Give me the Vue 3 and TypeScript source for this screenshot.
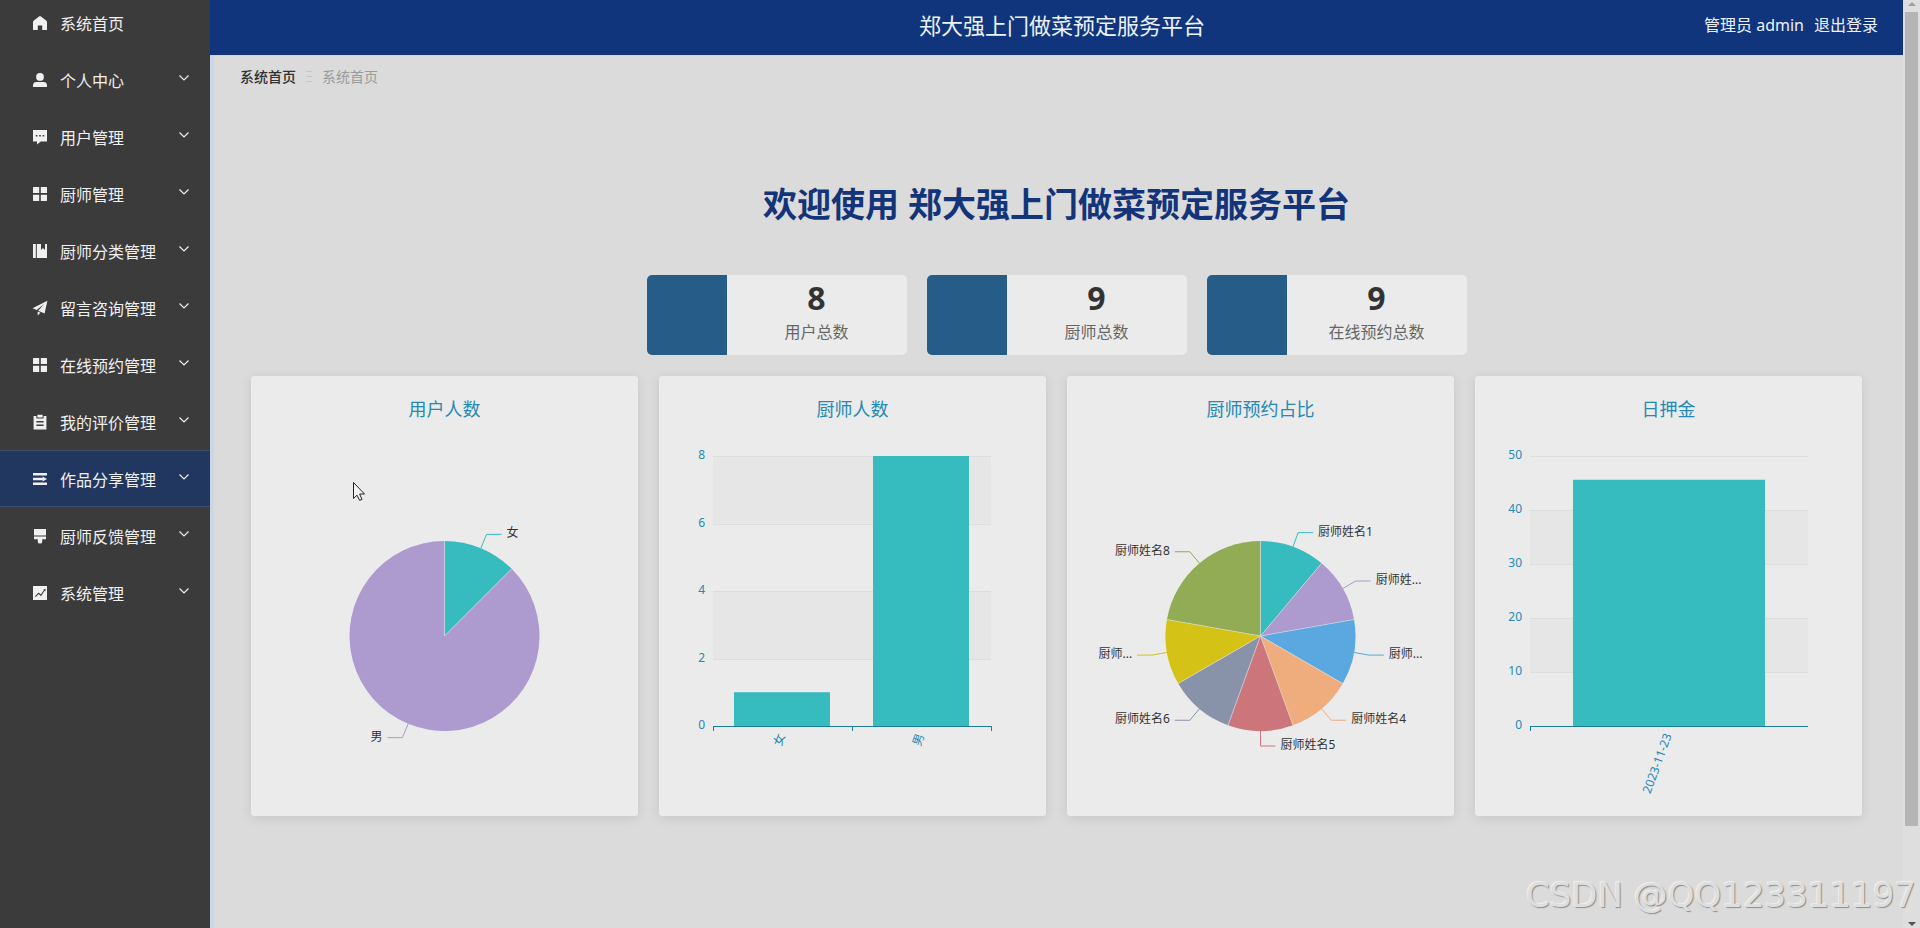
<script setup lang="ts">
interface MenuItem {
  label: string
  icon: string
  expandable: boolean
  active?: boolean
}

interface Slice {
  name: string
  value: number
  color: string
}

interface BarChart {
  max: number
  step: number
  left: number
  right: number
  closingTick: boolean
  bars: { name: string; value: number }[]
}

interface ChartCard {
  title: string
  pie?: Slice[]
  bar?: BarChart
}

const siteName = '郑大强上门做菜预定服务平台'

const icons: Record<string, string> = {
  home: 'M7 1.4 Q8 0.6 9 1.4 L14.4 5.8 Q15 6.4 15 7.2 V15 H10.2 V10.4 H5.8 V15 H1 V7.2 Q1 6.4 1.6 5.8 Z',
  user: 'M8 1 A3.9 3.9 0 1 1 8 8.8 A3.9 3.9 0 1 1 8 1 Z M1 15 V13.4 Q1 10 4.6 10 H11.4 Q15 10 15 13.4 V15 Z',
  comment: 'M1 1 H15 V12.4 H8.8 L5 15.6 V12.4 H1 Z M3.8 6 V7.6 H5.4 V6 Z M7.2 6 V7.6 H8.8 V6 Z M10.6 6 V7.6 H12.2 V6 Z',
  grid: 'M1.6 1 H7.2 V7 H1 V1.6 Z M8.8 1 H14.4 L15 1.6 V7 H8.8 Z M1 8.8 H7.2 V15 H1.6 L1 14.4 Z M8.8 8.8 H15 V14.4 L14.4 15 H8.8 Z',
  book: 'M1 1 H3.8 V15 H1 Z M4.8 1 H9 V7 L11 5 L13 7 V1 H15 V15 H4.8 Z',
  send: 'M15.4 0.8 L0.6 8.2 L4.6 10 L12 4.2 L6.2 10.8 L12.6 13.6 Z M5.6 11.6 L5.8 15.4 L8.4 12.8 Z',
  clipboard: 'M1.6 2 H4.4 V4.4 H11.6 V2 H14.4 V15.4 H1.6 Z M5.4 0.8 H10.6 V3.4 H5.4 Z M4.4 7 V8.4 H11.6 V7 Z M4.4 10.6 V12 H11.6 V10.6 Z',
  list: 'M1 2 H15 V4.4 H1 Z M1 6.8 H10.6 V5.4 L15 8 L10.6 10.6 V9.2 H1 Z M1 11.6 H15 V14 H1 Z',
  brush: 'M2 1 H14 V7.4 H2 Z M2 8.6 H14 V11.2 H10.2 V14 Q10.2 15.6 8 15.6 Q5.8 15.6 5.8 14 V11.2 H2 Z',
  chart: 'M1 1 H15 V15 H1 Z M3 11.2 L3.8 12 L6.6 9 L9 11.2 L12.6 5.8 L13.4 6.4 L13.6 3.8 L11.2 4.8 L11.8 5.2 L8.8 9.6 L6.6 7.6 Z',
}

const menu: MenuItem[] = [
  { label: '系统首页', icon: 'home', expandable: false },
  { label: '个人中心', icon: 'user', expandable: true },
  { label: '用户管理', icon: 'comment', expandable: true },
  { label: '厨师管理', icon: 'grid', expandable: true },
  { label: '厨师分类管理', icon: 'book', expandable: true },
  { label: '留言咨询管理', icon: 'send', expandable: true },
  { label: '在线预约管理', icon: 'grid', expandable: true },
  { label: '我的评价管理', icon: 'clipboard', expandable: true },
  { label: '作品分享管理', icon: 'list', expandable: true, active: true },
  { label: '厨师反馈管理', icon: 'brush', expandable: true },
  { label: '系统管理', icon: 'chart', expandable: true },
]

const stats = [
  { value: 8, label: '用户总数' },
  { value: 9, label: '厨师总数' },
  { value: 9, label: '在线预约总数' },
]

const cards: ChartCard[] = [
  {
    title: '用户人数',
    pie: [
      { name: '女', value: 1, color: '#36bbbf' },
      { name: '男', value: 7, color: '#ad9ace' },
    ],
  },
  {
    title: '厨师人数',
    bar: {
      max: 8, step: 2, left: 54, right: 332, closingTick: true,
      bars: [{ name: '女', value: 1 }, { name: '男', value: 8 }],
    },
  },
  {
    title: '厨师预约占比',
    pie: [
      { name: '厨师姓名1', value: 1, color: '#36bbbf' },
      { name: '厨师姓...', value: 1, color: '#ad9ace' },
      { name: '厨师...', value: 1, color: '#5ba7df' },
      { name: '厨师姓名4', value: 1, color: '#efad7e' },
      { name: '厨师姓名5', value: 1, color: '#cc767c' },
      { name: '厨师姓名6', value: 1, color: '#8892a9' },
      { name: '厨师...', value: 1, color: '#d4c216' },
      { name: '厨师姓名8', value: 2, color: '#92ac55' },
    ],
  },
  {
    title: '日押金',
    bar: {
      max: 50, step: 10, left: 55, right: 333, closingTick: false,
      bars: [{ name: '2023-11-23', value: 45.6 }],
    },
  },
]

const CX = 193.5
const CY = 196
const R = 95
const LEAD = 15

function polar(radius: number, turn: number): [number, number] {
  const a = turn * Math.PI * 2
  return [CX + radius * Math.sin(a), CY - radius * Math.cos(a)]
}

function pieParts(slices: Slice[]) {
  const total = slices.reduce((sum, s) => sum + s.value, 0)
  let start = 0
  return slices.map((s) => {
    const end = start + s.value / total
    const mid = (start + end) / 2
    const [x0, y0] = polar(R, start)
    const [x1, y1] = polar(R, end)
    const [px, py] = polar(R, mid)
    const [ex, ey] = polar(R + LEAD, mid)
    const dir = mid <= 0.5001 ? 1 : -1
    const part = {
      name: s.name,
      color: s.color,
      path: `M${CX} ${CY} L${x0} ${y0} A${R} ${R} 0 ${end - start > 0.5 ? 1 : 0} 1 ${x1} ${y1} Z`,
      leader: `${px},${py} ${ex},${ey} ${ex + dir * LEAD},${ey}`,
      tx: ex + dir * (LEAD + 5),
      ty: ey + 3,
      anchor: dir > 0 ? 'start' : 'end',
      seamX: x0,
      seamY: y0,
    }
    start = end
    return part
  })
}

const TOP = 16
const BASE = 286

function barParts(chart: BarChart) {
  const scale = (v: number) => BASE - (v / chart.max) * (BASE - TOP)
  const count = chart.max / chart.step
  const band = (chart.right - chart.left) / chart.bars.length
  const width = band * 0.69
  return {
    rows: Array.from({ length: count + 1 }, (_, i) => ({
      label: i * chart.step,
      y: Math.round(scale(i * chart.step)),
    })),
    stripes: Array.from({ length: count }, (_, i) => i)
      .filter((i) => i % 2 === 1)
      .map((i) => ({ y: scale((i + 1) * chart.step), h: scale(0) - scale(chart.step) })),
    bars: chart.bars.map((b, i) => {
      const cx = chart.left + band * (i + 0.5)
      return {
        name: b.name,
        cx,
        x: Math.floor(cx - width / 2),
        w: Math.round(width),
        y: scale(b.value),
        h: BASE - scale(b.value),
      }
    }),
    ticks: Array.from({ length: chart.bars.length + (chart.closingTick ? 1 : 0) }, (_, i) => Math.round(chart.left + band * i)),
  }
}

const charts = cards.map((c) => ({
  title: c.title,
  slices: c.pie ? pieParts(c.pie) : null,
  frame: c.bar ?? null,
  plot: c.bar ? barParts(c.bar) : null,
}))
</script>

<template>
  <div class="shell">
    <nav class="sidebar" aria-label="主菜单">
      <ul>
        <li v-for="item in menu" :key="item.label">
          <button type="button" class="menu-item" :class="{ active: item.active }">
            <svg class="menu-icon" viewBox="0 0 16 16" aria-hidden="true">
              <path :d="icons[item.icon]" fill="currentColor" fill-rule="evenodd" />
            </svg>
            <span class="menu-label">{{ item.label }}</span>
            <svg v-if="item.expandable" class="chevron" viewBox="0 0 12 12" aria-hidden="true">
              <path d="M1.5 3.5 L6 8 L10.5 3.5" fill="none" stroke="currentColor" stroke-width="1.2" />
            </svg>
          </button>
        </li>
      </ul>
    </nav>

    <div class="main">
      <header class="topbar">
        <div class="site-name">{{ siteName }}</div>
        <div class="account">
          <span>管理员 admin</span>
          <button type="button" class="logout">退出登录</button>
        </div>
      </header>

      <main class="content">
        <nav class="crumbs" aria-label="路径">
          <a href="#">系统首页</a>
          <svg class="crumb-sep" viewBox="0 0 8 12" aria-hidden="true">
            <path d="M1 1.5 H7 M2 6.5 H7 M1 11.5 H7" fill="none" stroke="#c6c6c6" />
          </svg>
          <span>系统首页</span>
        </nav>

        <h1>欢迎使用 {{ siteName }}</h1>

        <section class="stats">
          <div v-for="s in stats" :key="s.label" class="stat">
            <div class="stat-block"></div>
            <div class="stat-body">
              <strong>{{ s.value }}</strong>
              <span>{{ s.label }}</span>
            </div>
          </div>
        </section>

        <section class="charts">
          <article v-for="c in charts" :key="c.title" class="chart-card">
            <h2>{{ c.title }}</h2>
            <svg class="chart" viewBox="0 0 387 376" role="img" :aria-label="c.title">
              <g v-if="c.slices">
                <path v-for="(s, i) in c.slices" :key="'p' + i" :d="s.path" :fill="s.color" />
                <line v-for="(s, i) in c.slices" :key="'s' + i" class="seam" :x1="CX" :y1="CY" :x2="s.seamX" :y2="s.seamY" />
                <g v-for="(s, i) in c.slices" :key="'l' + i">
                  <polyline :points="s.leader" fill="none" :stroke="s.color" />
                  <text class="slice-label" :x="s.tx" :y="s.ty" :text-anchor="s.anchor">{{ s.name }}</text>
                </g>
              </g>
              <g v-if="c.plot && c.frame">
                <rect v-for="(s, i) in c.plot.stripes" :key="'a' + i" class="stripe" :x="c.frame.left" :y="s.y" :width="c.frame.right - c.frame.left" :height="s.h" />
                <g v-for="r in c.plot.rows" :key="'r' + r.label">
                  <rect class="gridline" :x="c.frame.left" :y="r.y" :width="c.frame.right - c.frame.left" height="1" />
                  <text class="axis-label" :x="c.frame.left - 8" :y="r.y + 3" text-anchor="end">{{ r.label }}</text>
                </g>
                <rect v-for="b in c.plot.bars" :key="b.name" class="bar" :x="b.x" :y="b.y" :width="b.w" :height="b.h" />
                <rect class="axis" :x="c.frame.left" y="286" :width="c.frame.right - c.frame.left" height="1" />
                <rect v-for="t in c.plot.ticks" :key="'t' + t" class="axis" :x="t" y="286" width="1" height="5" />
                <text
                  v-for="b in c.plot.bars"
                  :key="'x' + b.name"
                  class="axis-label"
                  text-anchor="end"
                  dy="4"
                  :transform="`translate(${b.cx - 1} 294) rotate(-70)`"
                >{{ b.name }}</text>
              </g>
            </svg>
          </article>
        </section>
      </main>
    </div>

    <div class="scrollbar" aria-hidden="true">
      <svg viewBox="0 0 8 4"><path d="M0 4 L4 0 L8 4 Z" fill="#a0a0a0" /></svg>
      <div class="track"><div class="thumb"></div></div>
      <svg viewBox="0 0 8 4"><path d="M0 0 L4 4 L8 0 Z" fill="#505050" /></svg>
    </div>

    <svg class="pointer" viewBox="0 0 12 19" aria-hidden="true">
      <path d="M0.5 0.5 V16.5 L4 13.2 L6.6 18.4 L9 17.4 L6.6 12 H11.5 Z" fill="#f4f4f4" stroke="#222" />
    </svg>

    <div class="watermark">CSDN @QQ123311197</div>
  </div>
</template>

<style>
body {
  margin: 0;
}
</style>

<style scoped>
.shell {
  position: relative;
  display: flex;
  height: 100vh;
  overflow: hidden;
  background: #dbdbdb;
  font-family: "Noto Sans", "Noto Sans CJK SC", sans-serif;
  font-size: 16px;
}

button {
  border: 0;
  background: none;
  color: inherit;
  font: inherit;
  cursor: pointer;
}

.sidebar {
  flex: none;
  width: 210px;
  background: #3b3b3b;
  color: #f0f0f0;
}

.sidebar ul {
  margin: -6px 0 0;
  padding: 0;
  list-style: none;
}

.menu-item {
  display: flex;
  align-items: center;
  box-sizing: border-box;
  width: 100%;
  height: 57px;
  padding: 0 20px 0 32px;
  border-top: 1px solid transparent;
  border-bottom: 1px solid transparent;
  text-align: left;
}

.menu-item.active {
  border-color: #3c5070;
  background: #22375f;
}

.menu-icon {
  width: 16px;
  height: 16px;
  margin-right: 12px;
}

.menu-label {
  flex: 1;
}

.chevron {
  width: 12px;
  height: 12px;
  margin-bottom: 3px;
}

.main {
  flex: 1;
  min-width: 0;
}

.topbar {
  display: grid;
  grid-template-columns: 1fr auto 1fr;
  align-items: center;
  box-sizing: border-box;
  height: 55px;
  padding: 0 25px 7px 36px;
  background: #10357d;
  color: #ecf2fa;
}

.site-name {
  grid-column: 2;
  font-size: 22px;
}

.account {
  display: flex;
  justify-content: flex-end;
  gap: 10px;
}

.logout {
  padding: 0;
}

.content {
  box-sizing: border-box;
  min-height: calc(100vh - 55px);
  padding: 8px 41px 0 37px;
  border-top: 1px solid #c9d9f0;
  border-left: 4px solid #cbd6e6;
}

.crumbs {
  display: flex;
  align-items: center;
  height: 24px;
  margin-left: -11px;
  gap: 9px;
  color: #9a9a9a;
  font-size: 14px;
}

.crumbs a {
  color: #303030;
  font-weight: 500;
  text-decoration: none;
}

.crumb-sep {
  width: 8px;
  height: 12px;
}

h1 {
  margin: 91px 0 0;
  color: #14347a;
  font-size: 34px;
  line-height: 50px;
  text-align: center;
}

.stats {
  display: flex;
  justify-content: center;
  gap: 20px;
  margin-top: 46px;
}

.stat {
  display: flex;
  width: 260px;
  height: 80px;
  overflow: hidden;
  border-radius: 5px;
  background: #ebebeb;
}

.stat-block {
  width: 80px;
  background: #265c88;
}

.stat-body {
  display: flex;
  flex: 1;
  flex-direction: column;
  align-items: center;
  color: #666;
}

.stat-body strong {
  color: #333;
  font-size: 32px;
  line-height: 46px;
}

.stat-body span {
  line-height: 22px;
}

.charts {
  display: grid;
  grid-template-columns: repeat(4, 1fr);
  gap: 21px;
  margin-top: 21px;
}

.chart-card {
  border-radius: 3px;
  background: #ebebeb;
  box-shadow: 0 2px 12px rgba(0, 0, 0, 0.1);
}

h2 {
  margin: 0;
  padding: 21px 0 19px;
  color: #2489b4;
  font-size: 18px;
  font-weight: 400;
  line-height: 24px;
  text-align: center;
}

.chart {
  display: block;
  width: 100%;
}

.chart text {
  font-size: 12px;
}

.seam {
  stroke: #ebebeb;
  stroke-opacity: 0.5;
}

.slice-label {
  fill: #333;
}

.stripe {
  fill: #e6e6e6;
}

.gridline {
  fill: #dcdddd;
}

.axis-label {
  fill: #2489b4;
}

.bar {
  fill: #36bbbf;
}

.axis {
  fill: #1a7f9c;
}

.scrollbar {
  display: flex;
  flex: none;
  flex-direction: column;
  align-items: center;
  box-sizing: border-box;
  width: 17px;
  padding: 2px 0;
  background: #dedede;
}

.scrollbar svg {
  width: 8px;
  height: 4px;
}

.track {
  flex: 1;
  width: 13px;
  margin: 6px 0;
}

.thumb {
  height: 90%;
  background: #b5b5b5;
}

.pointer {
  position: absolute;
  top: 482px;
  left: 353px;
  width: 12px;
  height: 19px;
}

.watermark {
  position: absolute;
  right: 4px;
  bottom: 11px;
  color: #dedede;
  font-family: "DejaVu Sans", sans-serif;
  font-size: 34px;
  line-height: 44px;
  text-shadow: 1px 1px 1px #8c8c8c, -1px -1px 1px #f0f0f0;
  white-space: nowrap;
}
</style>
